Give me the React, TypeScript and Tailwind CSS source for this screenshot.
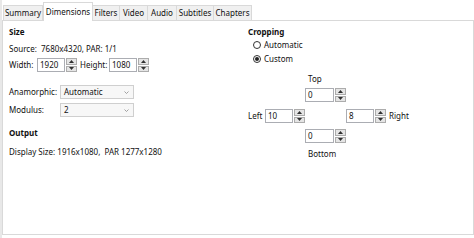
import React from 'react';

const TABS = [
  { label: 'Summary', w: 'w-[40px]' },
  { label: 'Dimensions', w: 'w-[50px]' },
  { label: 'Filters', w: 'w-[28px]' },
  { label: 'Video', w: 'w-[29px]' },
  { label: 'Audio', w: 'w-[30px]' },
  { label: 'Subtitles', w: 'w-[38px]' },
  { label: 'Chapters', w: 'w-[39px]' },
];

function Arrow({ up }: { up?: boolean }) {
  return (
    <svg width="5" height="3" viewBox="0 0 5 3" aria-hidden>
      <path d={up ? 'M0 3 L2.5 0 L5 3 Z' : 'M0 0 L2.5 3 L5 0 Z'} fill="#303030" />
    </svg>
  );
}

function SpinBox({ value, box = 'w-[29px]' }: { value: string; box?: string }) {
  return (
    <div className="flex h-[14px] items-stretch">
      <div className={`${box} flex items-center border border-[#abadb3] bg-white pl-[2px] leading-none`}>{value}</div>
      <div className="ml-[1px] flex w-[11px] flex-col gap-[1px]">
        <div className="flex flex-1 items-center justify-center border border-[#acacac] bg-[#e5e5e5]">
          <Arrow up />
        </div>
        <div className="flex flex-1 items-center justify-center border border-[#acacac] bg-[#e5e5e5]">
          <Arrow />
        </div>
      </div>
    </div>
  );
}

function Select({ value }: { value: string }) {
  return (
    <div className="flex h-[14px] w-[74px] items-center justify-between border border-[#cfcfcf] bg-[#f7f7f7] pl-[3px] pr-[4px] leading-none">
      <span>{value}</span>
      <svg width="5" height="3" viewBox="0 0 5 3" aria-hidden>
        <path d="M0.5 0.5 L2.5 2.5 L4.5 0.5" fill="none" stroke="#8a8a8a" strokeWidth="0.8" />
      </svg>
    </div>
  );
}

function Radio({ label, checked }: { label: string; checked?: boolean }) {
  return (
    <div className="flex h-[10px] items-center gap-[3px] pl-[5px]">
      <span className="flex h-[8px] w-[8px] items-center justify-center rounded-full border border-[#333] bg-white">
        {checked && <span className="h-[4px] w-[4px] rounded-full bg-[#222]" />}
      </span>
      <span>{label}</span>
    </div>
  );
}

export default function App() {
  return (
    <div
      className="h-[238px] w-[474px] overflow-hidden border-l-2 border-[#e8e8e8] bg-white text-[8px] leading-[10px] text-[#111]"
      style={{ fontFamily: '"Noto Sans", "Open Sans", sans-serif' }}
    >
      {/* Tab strip */}
      <div className="flex h-[20px] items-end pl-[1px]">
        {TABS.map((t) =>
          t.label === 'Dimensions' ? (
            <div
              key={t.label}
              className={`${t.w} relative z-10 -mb-[1px] flex h-[19px] items-center justify-center border border-b-0 border-[#d9d9d9] bg-white`}
            >
              {t.label}
            </div>
          ) : (
            <div
              key={t.label}
              className={`${t.w} -ml-[1px] flex h-[15px] items-center justify-center border border-b-0 border-[#d9d9d9] bg-[#f0f0f0] first:ml-0`}
            >
              {t.label}
            </div>
          )
        )}
      </div>

      {/* Panel */}
      <div className="grid h-[215px] w-[472px] grid-cols-[239px_1fr] border border-[#d9d9d9] bg-white pl-[6px] pt-[6px]">
        {/* Size / Output */}
        <div className="flex flex-col">
          <div className="font-bold">Size</div>
          <div className="mt-[7px]">Source:&nbsp; 7680x4320, PAR: 1/1</div>
          <div className="mt-[4px] flex items-center">
            <span className="w-[28px]">Width:</span>
            <SpinBox value="1920" box="w-[28px]" />
            <span className="ml-[3px] w-[29px]">Height:</span>
            <SpinBox value="1080" box="w-[28px]" />
          </div>
          <div className="mt-[13px] flex items-center">
            <span className="w-[51px]">Anamorphic:</span>
            <Select value="Automatic" />
          </div>
          <div className="mt-[4px] flex items-center">
            <span className="w-[51px]">Modulus:</span>
            <Select value="2" />
          </div>
          <div className="mt-[11px] font-bold">Output</div>
          <div className="mt-[9px]">Display Size: 1916x1080,&nbsp; PAR 1277x1280</div>
        </div>

        {/* Cropping */}
        <div className="flex flex-col">
          <div className="font-bold">Cropping</div>
          <div className="mt-[3px]">
            <Radio label="Automatic" />
          </div>
          <div className="mt-[4px]">
            <Radio label="Custom" checked />
          </div>

          <div className="mt-[10px] pl-[60px]">Top</div>
          <div className="mt-[4px] pl-[57px]">
            <SpinBox value="0" />
          </div>
          <div className="mt-[7px] flex items-center">
            <span className="w-[17px]">Left</span>
            <SpinBox value="10" box="w-[28px]" />
            <span className="w-[41px]" />
            <SpinBox value="8" box="w-[28px]" />
            <span className="pl-[3px]">Right</span>
          </div>
          <div className="mt-[6px] pl-[57px]">
            <SpinBox value="0" />
          </div>
          <div className="mt-[6px] pl-[60px]">Bottom</div>
        </div>
      </div>
    </div>
  );
}
